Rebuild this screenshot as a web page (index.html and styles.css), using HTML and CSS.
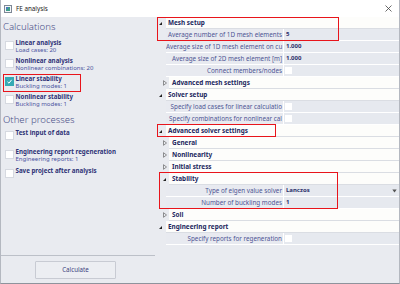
FILE: index.html
```html
<!DOCTYPE html>
<html>
<head>
<meta charset="utf-8">
<link rel="stylesheet" href="styles.css">
</head>
<body>
<div class="window">
  <div class="titlebar">
    <svg class="app-icon" width="8" height="8" viewBox="0 0 8 8"><rect x="0.5" y="0.5" width="7" height="7" fill="#f4f6f8" stroke="#7d8796"/><rect x="2" y="2" width="4" height="4" fill="#3e9e8a"/><rect x="2" y="2" width="2" height="2" fill="#4a78c0"/></svg>
    <span class="title">FE analysis</span>
    <svg class="close" width="7" height="7" viewBox="0 0 7 7"><path d="M0.5 0.5L6.5 6.5M6.5 0.5L0.5 6.5" stroke="#444" stroke-width="0.8"/></svg>
  </div>
  <div class="main">
    <div class="left">
      <div class="left-content">
        <div class="heading h-first">Calculations</div>
        <div class="item"><span class="cb"></span><div class="txt"><div class="name">Linear analysis</div><div class="sub">Load cases: 20</div></div></div>
        <div class="item"><span class="cb"></span><div class="txt"><div class="name">Nonlinear analysis</div><div class="sub">Nonlinear combinations: 20</div></div></div>
        <div class="item"><span class="cb checked"><svg width="7" height="7" viewBox="0 0 7 7"><path d="M1.5 3.8L3 5.2L5.6 1.8" fill="none" stroke="#fff" stroke-width="1"/></svg></span><div class="txt"><div class="name">Linear stability</div><div class="sub">Buckling modes: 1</div></div></div>
        <div class="item"><span class="cb"></span><div class="txt"><div class="name">Nonlinear stability</div><div class="sub">Buckling modes: 1</div></div></div>
        <div class="heading h-second">Other processes</div>
        <div class="item item2"><span class="cb"></span><div class="txt"><div class="name">Test input of data</div><div class="sub"></div></div></div>
        <div class="item item2"><span class="cb"></span><div class="txt"><div class="name">Engineering report regeneration</div><div class="sub">Engineering reports: 1</div></div></div>
        <div class="item item2"><span class="cb"></span><div class="txt"><div class="name">Save project after analysis</div><div class="sub"></div></div></div>
        <div class="hl hl-left"></div>
      </div>
      <div class="left-footer"><button class="calc">Calculate</button></div>
    </div>
    <div class="right">
      <div class="grid">
        <div class="row cat l0"><span class="gut"><svg class="exp" width="3" height="3" viewBox="0 0 3 3"><path d="M3 0L3 3L0 3Z" fill="#222"/></svg></span><span class="cname">Mesh setup</span></div>
        <div class="row data"><span class="gut"></span><span class="label">Average number of 1D mesh elements</span><span class="val">5</span></div>
        <div class="row data"><span class="gut"></span><span class="label">Average size of 1D mesh element on cu</span><span class="val">1.000</span></div>
        <div class="row data"><span class="gut"></span><span class="label">Average size of 2D mesh element [m]</span><span class="val">1.000</span></div>
        <div class="row data"><span class="gut"></span><span class="label">Connect members/nodes</span><span class="val"><span class="vcb"></span></span></div>
        <div class="row cat l1"><span class="gut"><svg class="col" width="4" height="6" viewBox="0 0 4 6"><path d="M0.5 0.7L3.5 3L0.5 5.3Z" fill="none" stroke="#666" stroke-width="0.7"/></svg></span><span class="cname">Advanced mesh settings</span></div>
        <div class="row cat l0"><span class="gut"><svg class="exp" width="3" height="3" viewBox="0 0 3 3"><path d="M3 0L3 3L0 3Z" fill="#222"/></svg></span><span class="cname">Solver setup</span></div>
        <div class="row data"><span class="gut"></span><span class="label">Specify load cases for linear calculatio</span><span class="val"><span class="vcb"></span></span></div>
        <div class="row data"><span class="gut"></span><span class="label">Specify combinations for nonlinear cal</span><span class="val"><span class="vcb"></span></span></div>
        <div class="row cat l0"><span class="gut"><svg class="exp" width="3" height="3" viewBox="0 0 3 3"><path d="M3 0L3 3L0 3Z" fill="#222"/></svg></span><span class="cname">Advanced solver settings</span></div>
        <div class="row cat l1"><span class="gut"><svg class="col" width="4" height="6" viewBox="0 0 4 6"><path d="M0.5 0.7L3.5 3L0.5 5.3Z" fill="none" stroke="#666" stroke-width="0.7"/></svg></span><span class="cname">General</span></div>
        <div class="row cat l1"><span class="gut"><svg class="col" width="4" height="6" viewBox="0 0 4 6"><path d="M0.5 0.7L3.5 3L0.5 5.3Z" fill="none" stroke="#666" stroke-width="0.7"/></svg></span><span class="cname">Nonlinearity</span></div>
        <div class="row cat l1"><span class="gut"><svg class="col" width="4" height="6" viewBox="0 0 4 6"><path d="M0.5 0.7L3.5 3L0.5 5.3Z" fill="none" stroke="#666" stroke-width="0.7"/></svg></span><span class="cname">Initial stress</span></div>
        <div class="row cat l1"><span class="gut"><svg class="exp" width="3" height="3" viewBox="0 0 3 3"><path d="M3 0L3 3L0 3Z" fill="#222"/></svg></span><span class="cname">Stability</span></div>
        <div class="row data"><span class="gut"></span><span class="label">Type of eigen value solver</span><span class="val drop">Lanczos<svg class="arrow" width="5" height="4" viewBox="0 0 5 4"><path d="M0.3 0.5L4.7 0.5L2.5 3.5Z" fill="#555"/></svg></span></div>
        <div class="row data"><span class="gut"></span><span class="label">Number of buckling modes</span><span class="val">1</span></div>
        <div class="row cat l1"><span class="gut"><svg class="col" width="4" height="6" viewBox="0 0 4 6"><path d="M0.5 0.7L3.5 3L0.5 5.3Z" fill="none" stroke="#666" stroke-width="0.7"/></svg></span><span class="cname">Soil</span></div>
        <div class="row cat l0"><span class="gut"><svg class="exp" width="3" height="3" viewBox="0 0 3 3"><path d="M3 0L3 3L0 3Z" fill="#222"/></svg></span><span class="cname">Engineering report</span></div>
        <div class="row data"><span class="gut"></span><span class="label">Specify reports for regeneration</span><span class="val"><span class="vcb"></span></span></div>
        <div class="hl hl-mesh"></div>
        <div class="hl hl-adv"></div>
        <div class="hl hl-stab"></div>
      </div>
    </div>
  </div>
</div>
</body>
</html>
```

FILE: styles.css
```css
html, body {
  margin: 0;
  padding: 0;
}
body {
  width: 400px;
  height: 284px;
  overflow: hidden;
  font-family: "Noto Sans", "Open Sans", sans-serif;
}
.window {
  width: 400px;
  height: 284px;
  box-sizing: border-box;
  border-left: 1px solid #b4b8c0;
  border-right: 1px solid #b4b8c0;
  border-bottom: 1px solid #8e939c;
  display: flex;
  flex-direction: column;
  background: #e9ebf0;
}
.titlebar {
  height: 17px;
  flex: none;
  background: #ffffff;
  display: flex;
  align-items: center;
  padding-left: 3px;
}
.app-icon {
  display: block;
}
.title {
  font-size: 6.3px;
  color: #1a1a1a;
  margin-left: 4px;
  line-height: 8px;
}
.close {
  margin-left: auto;
  margin-right: 7px;
  display: block;
}
.main {
  flex: 1;
  display: flex;
  min-height: 0;
}
.left {
  width: 154px;
  flex: none;
  display: flex;
  flex-direction: column;
}
.left-content {
  flex: 1;
  position: relative;
}
.heading {
  font-size: 9.6px;
  line-height: 14px;
  height: 14px;
  color: #4a4f88;
  padding-left: 2px;
  font-weight: 300;
}
.h-first {
  margin-top: 3px;
  margin-bottom: 5px;
}
.h-second {
  margin-top: 2px;
  margin-bottom: 2px;
}
.item {
  height: 18px;
  display: flex;
  align-items: flex-start;
  padding-left: 4px;
}
.item2 {
  height: 19px;
}
.cb {
  width: 7px;
  height: 7px;
  margin-top: 1.5px;
  background: #ffffff;
  border: 0.5px solid #d6d9e0;
  flex: none;
  display: flex;
  align-items: center;
  justify-content: center;
}
.cb.checked {
  background: #35aab4;
  border-color: #35aab4;
}
.cb svg {
  display: block;
}
.txt {
  margin-left: 1.5px;
}
.name {
  font-size: 6.2px;
  font-weight: 700;
  color: #2d3276;
  line-height: 8px;
  height: 8px;
  white-space: nowrap;
}
.sub {
  font-size: 6px;
  color: #4b53a0;
  line-height: 7px;
  height: 7px;
  white-space: nowrap;
}
.left-footer {
  height: 27px;
  flex: none;
  border-top: 1px solid #bcc0c8;
  display: flex;
  justify-content: flex-start;
  align-items: center;
  padding-left: 34px;
}
.calc {
  width: 81px;
  height: 18px;
  margin: 0;
  padding: 0;
  background: #eceef2;
  border: 1px solid #c8cbd3;
  border-radius: 1px;
  font-family: "Noto Sans", "Open Sans", sans-serif;
  font-size: 6.2px;
  color: #3b3f7e;
}
.right {
  flex: 1;
  padding-left: 2px;
}
.grid {
  position: relative;
}
.row {
  display: flex;
  height: 12px;
  box-sizing: border-box;
}
.gut {
  width: 9px;
  flex: none;
  display: flex;
  align-items: center;
}
.l0 .gut {
  padding-left: 2px;
  box-sizing: border-box;
}
.l1 .gut {
  width: 12px;
  padding-left: 6px;
  box-sizing: border-box;
}
.gut svg {
  display: block;
}
.cname {
  flex: 1;
  background: #fdfdfb;
  border-bottom: 1px solid #dadde3;
  font-size: 6.4px;
  font-weight: 700;
  color: #22275e;
  line-height: 11px;
  padding-left: 2px;
  white-space: nowrap;
}
.l1 .cname {
  padding-left: 3px;
}
.data .label {
  width: 117px;
  flex: none;
  box-sizing: border-box;
  padding-right: 1px;
  text-align: right;
  white-space: nowrap;
  overflow: hidden;
  font-size: 6.3px;
  color: #4e5594;
  line-height: 11px;
  background: #e8eaf0;
  border-bottom: 1px solid #ffffff;
}
.val {
  flex: 1;
  box-sizing: border-box;
  border-left: 1px solid #ffffff;
  border-bottom: 1px solid #ffffff;
  background: #e6e9ef;
  padding-left: 2px;
  font-size: 6px;
  font-weight: 700;
  color: #2a2f6a;
  line-height: 11px;
  display: flex;
  align-items: center;
}
.drop .arrow {
  margin-left: auto;
  margin-right: 2px;
  display: block;
}
.vcb {
  width: 7px;
  height: 7px;
  background: #ffffff;
  display: block;
  margin-left: -1px;
}
.hl {
  position: absolute;
  border: 1px solid #e8141b;
  box-sizing: border-box;
  pointer-events: none;
}
.hl-left {
  left: 2px;
  top: 57px;
  width: 78px;
  height: 18px;
}
.hl-mesh {
  left: 0px;
  top: 0px;
  width: 182px;
  height: 24px;
}
.hl-adv {
  left: 0px;
  top: 107px;
  width: 119px;
  height: 13px;
}
.hl-stab {
  left: 2px;
  top: 155px;
  width: 179px;
  height: 37px;
}
```
